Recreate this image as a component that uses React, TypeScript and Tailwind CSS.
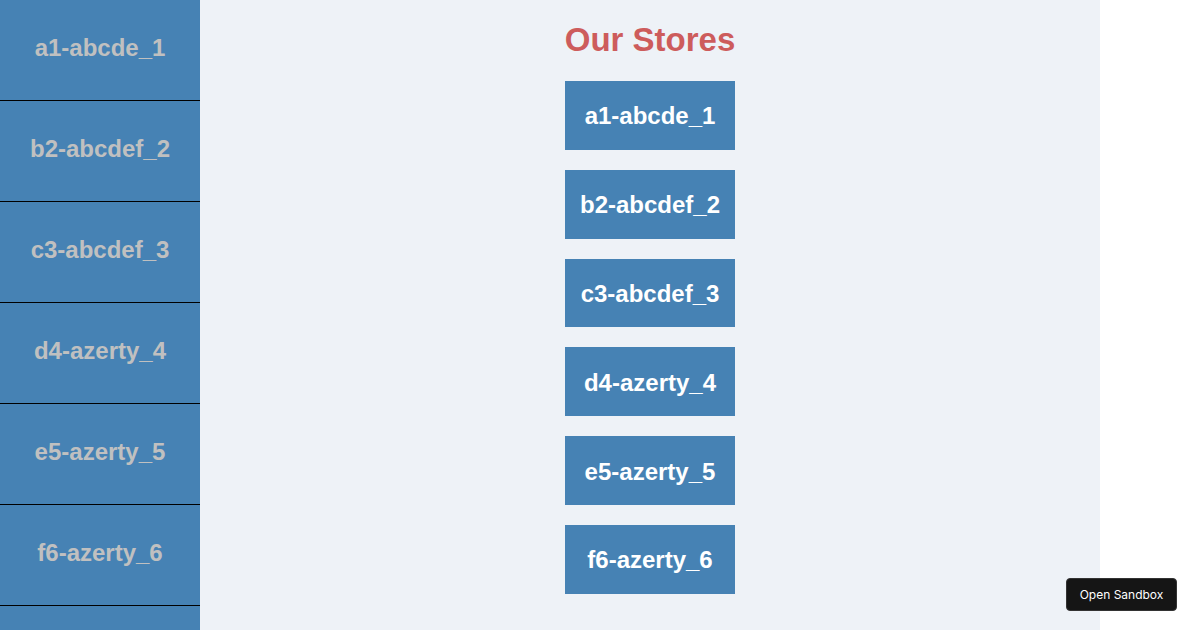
const stores = [
  "a1-abcde_1",
  "b2-abcdef_2",
  "c3-abcdef_3",
  "d4-azerty_4",
  "e5-azerty_5",
  "f6-azerty_6",
  "g7-azerty_7",
];

export default function App() {
  return (
    <div className="relative flex h-[630px] w-[1200px] overflow-hidden bg-white font-['Liberation_Sans',Arial,sans-serif]">
      {/* sidebar */}
      <nav className="flex w-[200px] shrink-0 flex-col bg-[#4682b4]">
        {stores.map((s) => (
          <div
            key={s}
            className="flex h-[101px] shrink-0 items-center justify-center border-b border-black pb-[5px] text-[24px] font-bold text-[#c0c0c0]"
          >
            {s.startsWith("g7") ? "" : s}
          </div>
        ))}
      </nav>

      {/* main */}
      <main className="flex w-[900px] flex-col items-center bg-[#eef2f7]">
        <h1 className="mt-[21px] text-[33px] leading-[37px] font-bold text-[#cd5c5c]">
          Our Stores
        </h1>
        <div className="mt-[23px] flex flex-col gap-[20px]">
          {stores.slice(0, 6).map((s) => (
            <button
              key={s}
              className="flex h-[68.8px] w-[170px] items-center justify-center bg-[#4682b4] pt-[2px] text-[24px] font-bold text-white"
            >
              {s}
            </button>
          ))}
        </div>
      </main>

      <button className="absolute top-[578px] left-[1066px] flex h-[33px] w-[111px] items-center justify-center rounded-[4px] border border-[#333] bg-[#151515] text-[12px] text-white font-['Inter',sans-serif]">
        Open Sandbox
      </button>
    </div>
  );
}
